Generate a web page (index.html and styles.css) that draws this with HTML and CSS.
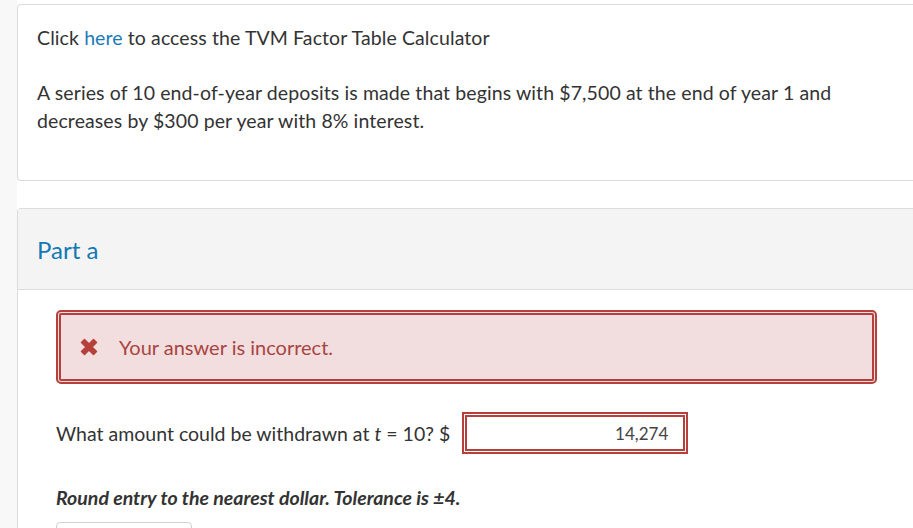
FILE: index.html
```html
<!DOCTYPE html>
<html>
<head>
<meta charset="utf-8">
<link rel="stylesheet" href="styles.css">
</head>
<body>
<div class="strip"></div>
<div class="main">
  <div class="card intro">
    <p class="line">Click <a class="link" href="#">here</a> to access the TVM Factor Table Calculator</p>
    <p class="para">A series of 10 end-of-year deposits is made that begins with $7,500 at the end of year 1 and decreases by $300 per year with 8% interest.</p>
  </div>
  <div class="card part">
    <div class="part-head">Part a</div>
    <div class="part-body">
      <div class="alert">
        <svg class="xicon" width="20" height="20" viewBox="0 0 20 20"><path d="M2.5 5.5 L5.5 2.5 L10 7 L14.5 2.5 L17.5 5.5 L13 10 L17.5 14.5 L14.5 17.5 L10 13 L5.5 17.5 L2.5 14.5 L7 10 Z" fill="#b5403c" stroke="#b5403c" stroke-width="1.5" stroke-linejoin="round"/></svg>
        <span class="alert-text">Your answer is incorrect.</span>
      </div>
      <div class="question">
        <span>What amount could be withdrawn at <i>t</i> = 10? $</span>
        <div class="answer">14,274</div>
      </div>
      <p class="note">Round entry to the nearest dollar. Tolerance is ±4.</p>
      <div class="btn"></div>
    </div>
  </div>
</div>
</body>
</html>
```
FILE: styles.css
```css
html, body {
  margin: 0;
  padding: 0;
}
body {
  display: flex;
  height: 528px;
  overflow: hidden;
  font-family: Lato, "Open Sans", sans-serif;
  color: #333;
  background: #fff;
}
.strip {
  width: 17px;
  flex: none;
  background: #f8f8f8;
}
.main {
  flex: 1;
  padding-top: 4px;
  background: #fff;
}
.card {
  border: 1px solid #dcdcdc;
  border-right: none;
  border-radius: 4px 0 0 4px;
}
.intro {
  height: 177px;
  box-sizing: border-box;
  padding: 19px 0 0 19px;
  font-size: 19.5px;
  line-height: 28px;
  letter-spacing: 0.1px;
}
.intro p {
  margin: 0;
}
.line {
  margin-bottom: 27px !important;
}
.link {
  color: #1a7ab8;
  text-decoration: none;
}
.para {
  max-width: 800px;
}
.part {
  margin-top: 27px;
  border-bottom: none;
  border-radius: 4px 0 0 0;
}
.part-head {
  height: 81px;
  background: #f4f4f4;
  border-bottom: 1px solid #dcdcdc;
  box-sizing: border-box;
  padding: 25px 0 0 19px;
  font-size: 24px;
  line-height: 32px;
  color: #1078b2;
}
.part-body {
  padding: 20px 36px 0 38px;
}
.alert {
  height: 74px;
  box-sizing: border-box;
  border: 5px double #b5403c;
  border-radius: 5px;
  background: #f2dede;
  display: flex;
  align-items: center;
  padding-left: 18px;
  gap: 20px;
  color: #a94442;
  font-size: 20px;
}
.xicon {
  flex: none;
}
.question {
  display: flex;
  align-items: center;
  margin-top: 28px;
  font-size: 19.5px;
  gap: 12px;
}
.answer {
  width: 226px;
  height: 42px;
  box-sizing: border-box;
  border: 5px double #b5403c;
  padding-right: 15px;
  display: flex;
  align-items: center;
  justify-content: flex-end;
  font-size: 17px;
  color: #444;
}
.note {
  margin: 30px 0 0 0;
  font-size: 19.5px;
  font-weight: bold;
  font-style: italic;
  line-height: 28px;
}
.btn {
  margin-top: 10px;
  width: 134px;
  height: 40px;
  border: 1px solid #d0d0d0;
  border-radius: 4px;
}
```
